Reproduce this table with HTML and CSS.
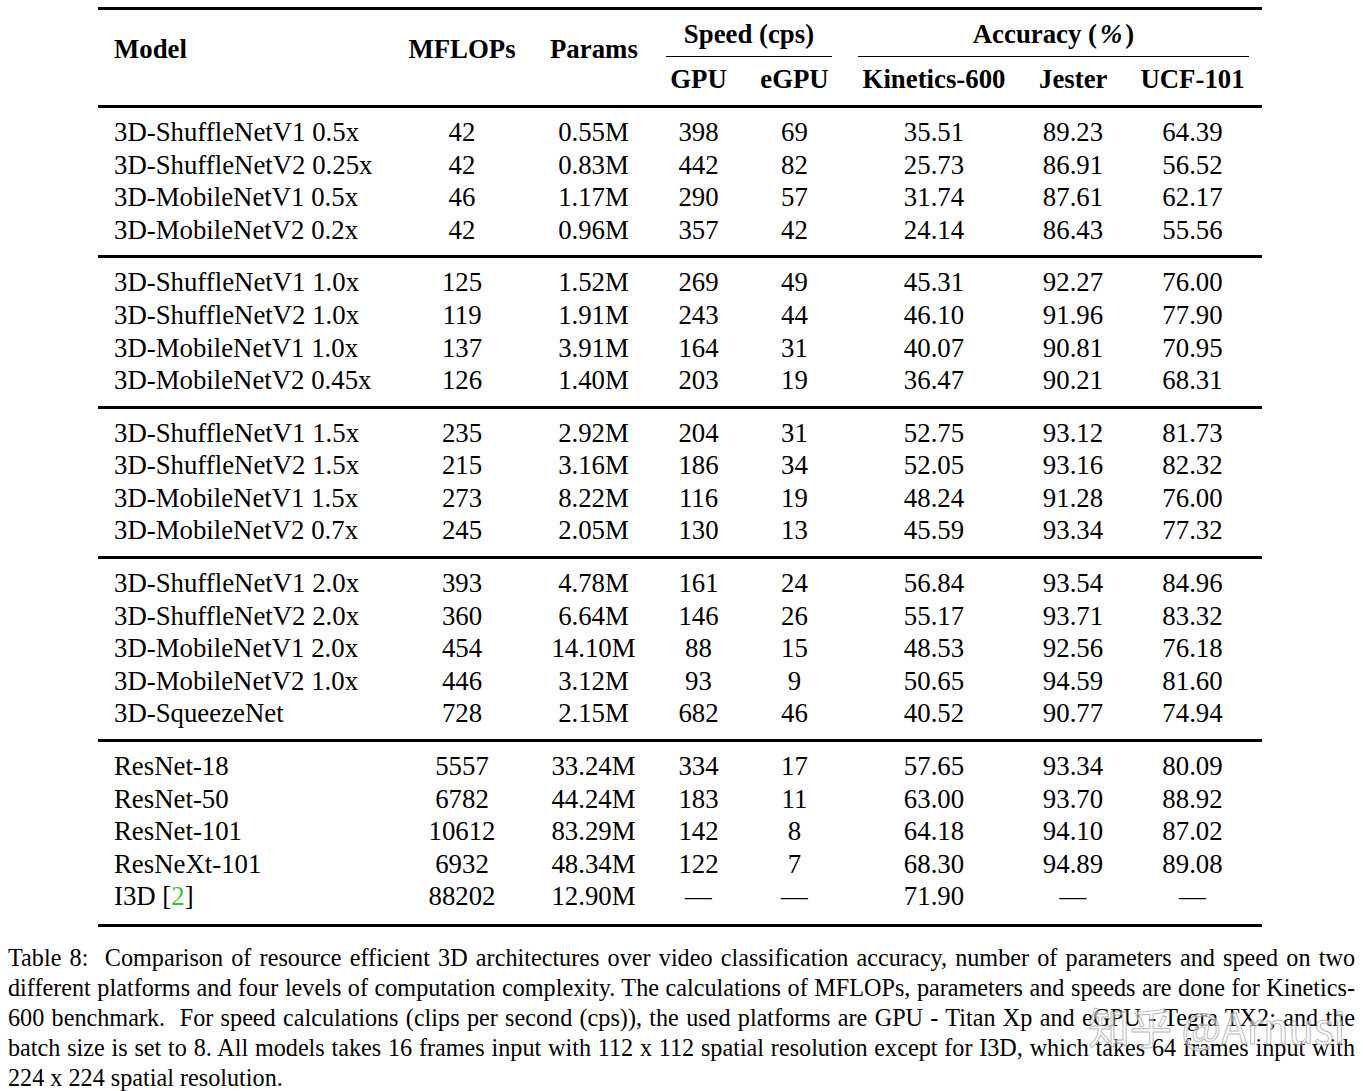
FILE: index.html
```html
<!DOCTYPE html>
<html>
<head>
<meta charset="utf-8">
<link rel="stylesheet" href="styles.css">
</head>
<body>
<div class="page">
  <table class="results">
    <colgroup>
      <col class="c-model"><col class="c-mflops"><col class="c-params"><col class="c-gpu"><col class="c-egpu"><col class="c-kin"><col class="c-jes"><col class="c-ucf">
    </colgroup>
    <thead>
      <tr class="h1">
        <th rowspan="2" class="left span">Model</th>
        <th rowspan="2" class="span">MFLOPs</th>
        <th rowspan="2" class="span">Params</th>
        <th colspan="2" class="group"><div class="cmid">Speed (cps)</div></th>
        <th colspan="3" class="group"><div class="cmid">Accuracy (<span class="pct">%</span>)</div></th>
      </tr>
      <tr class="h2">
        <th>GPU</th><th>eGPU</th><th>Kinetics-600</th><th>Jester</th><th>UCF-101</th>
      </tr>
    </thead>
    <tbody>
      <tr><td>3D-ShuffleNetV1 0.5x</td><td>42</td><td>0.55M</td><td>398</td><td>69</td><td>35.51</td><td>89.23</td><td>64.39</td></tr>
      <tr><td>3D-ShuffleNetV2 0.25x</td><td>42</td><td>0.83M</td><td>442</td><td>82</td><td>25.73</td><td>86.91</td><td>56.52</td></tr>
      <tr><td>3D-MobileNetV1 0.5x</td><td>46</td><td>1.17M</td><td>290</td><td>57</td><td>31.74</td><td>87.61</td><td>62.17</td></tr>
      <tr><td>3D-MobileNetV2 0.2x</td><td>42</td><td>0.96M</td><td>357</td><td>42</td><td>24.14</td><td>86.43</td><td>55.56</td></tr>
    </tbody>
    <tbody>
      <tr><td>3D-ShuffleNetV1 1.0x</td><td>125</td><td>1.52M</td><td>269</td><td>49</td><td>45.31</td><td>92.27</td><td>76.00</td></tr>
      <tr><td>3D-ShuffleNetV2 1.0x</td><td>119</td><td>1.91M</td><td>243</td><td>44</td><td>46.10</td><td>91.96</td><td>77.90</td></tr>
      <tr><td>3D-MobileNetV1 1.0x</td><td>137</td><td>3.91M</td><td>164</td><td>31</td><td>40.07</td><td>90.81</td><td>70.95</td></tr>
      <tr><td>3D-MobileNetV2 0.45x</td><td>126</td><td>1.40M</td><td>203</td><td>19</td><td>36.47</td><td>90.21</td><td>68.31</td></tr>
    </tbody>
    <tbody>
      <tr><td>3D-ShuffleNetV1 1.5x</td><td>235</td><td>2.92M</td><td>204</td><td>31</td><td>52.75</td><td>93.12</td><td>81.73</td></tr>
      <tr><td>3D-ShuffleNetV2 1.5x</td><td>215</td><td>3.16M</td><td>186</td><td>34</td><td>52.05</td><td>93.16</td><td>82.32</td></tr>
      <tr><td>3D-MobileNetV1 1.5x</td><td>273</td><td>8.22M</td><td>116</td><td>19</td><td>48.24</td><td>91.28</td><td>76.00</td></tr>
      <tr><td>3D-MobileNetV2 0.7x</td><td>245</td><td>2.05M</td><td>130</td><td>13</td><td>45.59</td><td>93.34</td><td>77.32</td></tr>
    </tbody>
    <tbody>
      <tr><td>3D-ShuffleNetV1 2.0x</td><td>393</td><td>4.78M</td><td>161</td><td>24</td><td>56.84</td><td>93.54</td><td>84.96</td></tr>
      <tr><td>3D-ShuffleNetV2 2.0x</td><td>360</td><td>6.64M</td><td>146</td><td>26</td><td>55.17</td><td>93.71</td><td>83.32</td></tr>
      <tr><td>3D-MobileNetV1 2.0x</td><td>454</td><td>14.10M</td><td>88</td><td>15</td><td>48.53</td><td>92.56</td><td>76.18</td></tr>
      <tr><td>3D-MobileNetV2 1.0x</td><td>446</td><td>3.12M</td><td>93</td><td>9</td><td>50.65</td><td>94.59</td><td>81.60</td></tr>
      <tr><td>3D-SqueezeNet</td><td>728</td><td>2.15M</td><td>682</td><td>46</td><td>40.52</td><td>90.77</td><td>74.94</td></tr>
    </tbody>
    <tbody class="last">
      <tr><td>ResNet-18</td><td>5557</td><td>33.24M</td><td>334</td><td>17</td><td>57.65</td><td>93.34</td><td>80.09</td></tr>
      <tr><td>ResNet-50</td><td>6782</td><td>44.24M</td><td>183</td><td>11</td><td>63.00</td><td>93.70</td><td>88.92</td></tr>
      <tr><td>ResNet-101</td><td>10612</td><td>83.29M</td><td>142</td><td>8</td><td>64.18</td><td>94.10</td><td>87.02</td></tr>
      <tr><td>ResNeXt-101</td><td>6932</td><td>48.34M</td><td>122</td><td>7</td><td>68.30</td><td>94.89</td><td>89.08</td></tr>
      <tr><td>I3D [<span class="cite">2</span>]</td><td>88202</td><td>12.90M</td><td>—</td><td>—</td><td>71.90</td><td>—</td><td>—</td></tr>
    </tbody>
  </table>

  <div class="caption">
    <div class="line">Table 8:&nbsp; Comparison of resource efficient 3D architectures over video classification accuracy, number of parameters and speed on two</div>
    <div class="line">different platforms and four levels of computation complexity. The calculations of MFLOPs, parameters and speeds are done for Kinetics-</div>
    <div class="line">600 benchmark.&nbsp; For speed calculations (clips per second (cps)), the used platforms are GPU - Titan Xp and eGPU - Tegra TX2; and the</div>
    <div class="line">batch size is set to 8. All models takes 16 frames input with 112 x 112 spatial resolution except for I3D, which takes 64 frames input with</div>
    <div class="line end">224 x 224 spatial resolution.</div>
    <div class="watermark">知乎 @Arnusi</div>
  </div>
</div>
</body>
</html>
```

FILE: styles.css
```css
html, body {
  margin: 0;
  padding: 0;
  background: #ffffff;
}

.page {
  padding: 7px 8px 0 8px;
  font-family: "Liberation Serif", "Times New Roman", serif;
  color: #000;
}

.results {
  margin-left: 90px;
  width: 1164px;
  table-layout: fixed;
  border-collapse: separate;
  border-spacing: 0;
  font-family: "Liberation Serif", "Times New Roman", serif;
  font-size: 26.8px;
  line-height: 32.6px;
}

.c-model { width: 292px; }
.c-mflops { width: 144px; }
.c-params { width: 119px; }
.c-gpu { width: 91px; }
.c-egpu { width: 101px; }
.c-kin { width: 178px; }
.c-jes { width: 100px; }
.c-ucf { width: 139px; }

.results th,
.results td {
  padding: 0 16px;
  text-align: center;
  white-space: nowrap;
  font-weight: normal;
}

.results th {
  font-weight: bold;
}

.results .left,
.results td:first-child {
  text-align: left;
}

.h1 th {
  border-top: 3px solid #000;
}

.h1 th.span {
  vertical-align: top;
  padding-top: 22.7px;
}

.h1 th.group {
  vertical-align: top;
  padding: 8px 13px 0 13px;
}

.cmid {
  padding-bottom: 5.4px;
  border-bottom: 1px solid #000;
}

.pct {
  font-style: italic;
  margin: 0 3px;
}

.h2 th {
  padding-top: 5.7px;
  padding-bottom: 9.7px;
}

tbody tr:first-child td {
  border-top: 3px solid #000;
  padding-top: 8px;
}

tbody tr:last-child td {
  padding-bottom: 9px;
}

tbody.last tr:last-child td {
  border-bottom: 3px solid #000;
  padding-bottom: 11px;
}

.cite {
  color: #3cbf3c;
}

.caption {
  position: relative;
  margin-top: 16px;
  width: 1347px;
  font-size: 24.2px;
  line-height: 30px;
}

.caption .line {
  white-space: nowrap;
  text-align: justify;
  text-align-last: justify;
}

.caption .line.end {
  text-align: left;
  text-align-last: left;
}

.watermark {
  position: absolute;
  left: 1080px;
  top: 58px;
  font-family: "Noto Sans CJK SC", "Noto Sans", sans-serif;
  font-size: 42px;
  line-height: 50px;
  color: rgba(255, 255, 255, 0.55);
  -webkit-text-stroke: 1px rgba(160, 160, 160, 0.75);
  white-space: nowrap;
}
```
